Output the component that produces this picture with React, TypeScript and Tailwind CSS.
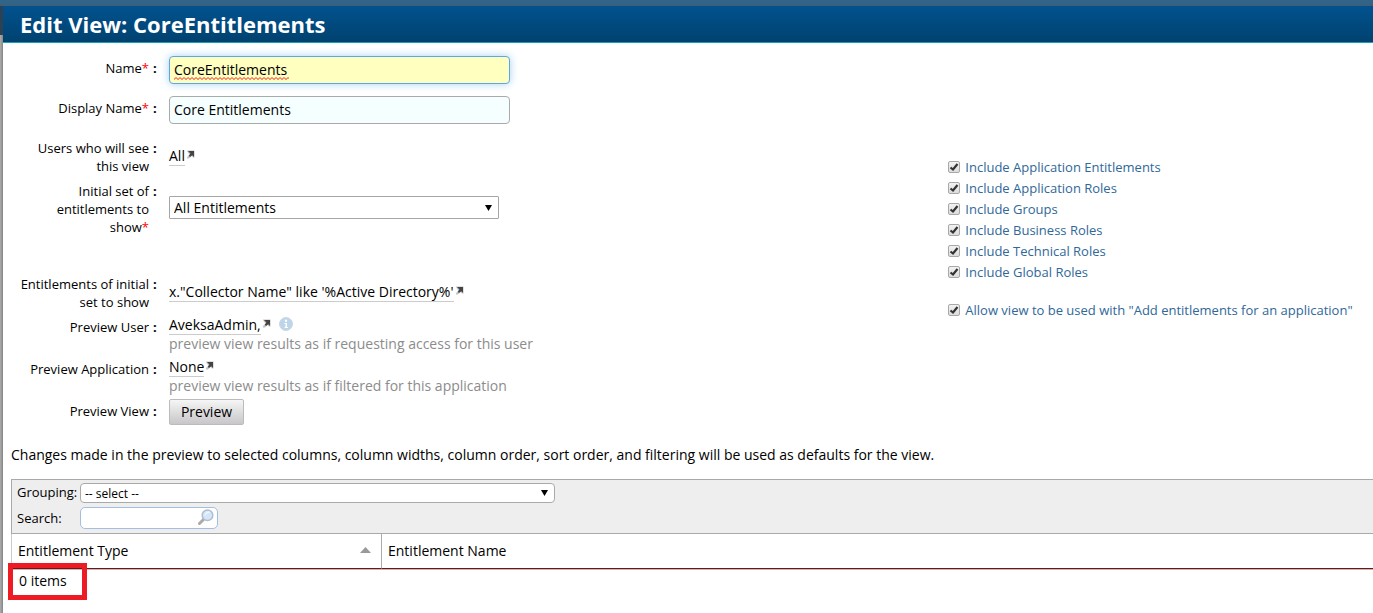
import { useState, type ReactNode } from "react";

const INCLUDES = [
  "Include Application Entitlements",
  "Include Application Roles",
  "Include Groups",
  "Include Business Roles",
  "Include Technical Roles",
  "Include Global Roles",
];

interface RowProps {
  label: string;
  htmlFor?: string;
  required?: boolean;
  className?: string;
  children: ReactNode;
}

function Row({ label, htmlFor, required, className = "", children }: RowProps) {
  return (
    <div className={`flex ${className}`}>
      <div className="flex w-[158px] shrink-0 pt-[3px]">
        <label
          htmlFor={htmlFor}
          className="ml-auto w-[130px] text-right text-[13px] leading-[18px]"
        >
          {label}
          {required && <span className="text-[#f00]">*</span>}
        </label>
        <span className="w-5 pl-1 text-[13px] leading-[18px] font-bold">:</span>
      </div>
      <div className="min-w-0">{children}</div>
    </div>
  );
}

function EditLink({ text }: { text: string }) {
  return (
    <a href="#" className="inline-flex items-start text-[14px] leading-[18px] text-black">
      <span className="border-b border-[#ccc]">{text}</span>
      <svg width="9" height="9" viewBox="0 0 9 9" className="mt-[3px] ml-px">
        <path d="M1 0.500h7.500V7.500H7L5.500 6 3 8.500H1V7l2.500-2.500L1.500 2z" fill="#c4c4c4" />
        <path d="M2 1h6v6L6.200 5.200 4 7 2.800 5.800 4.400 3.400z" fill="#444" />
      </svg>
    </a>
  );
}

function Check({ id, label }: { id: string; label: string }) {
  return (
    <div className="flex h-[21px] items-center">
      <span className="relative mr-[5px] h-3 w-3 shrink-0">
        <input
          id={id}
          type="checkbox"
          defaultChecked
          className="peer block h-3 w-3 appearance-none rounded-xs border border-[#a8a8a8] bg-linear-to-b from-[#f2f2f2] to-[#dcdcdc]"
        />
        <svg
          viewBox="0 0 12 12"
          className="pointer-events-none absolute inset-0 hidden h-3 w-3 peer-checked:block"
        >
          <path d="M2.500 6.500 5 8.500 9.500 3" fill="none" stroke="#333" strokeWidth="2.200" />
        </svg>
      </span>
      <label htmlFor={id} className="text-[13px] leading-[18px] text-[#2f6899]">
        {label}
      </label>
    </div>
  );
}

function Arrow() {
  return (
    <svg
      viewBox="0 0 7 6"
      className="pointer-events-none absolute top-1/2 right-[7px] h-[6px] w-[7px] -translate-y-1/2"
    >
      <path d="M0 0h7L3.500 6z" fill="#000" />
    </svg>
  );
}

// red zigzag under a misspelled word
function Squiggle() {
  return (
    <svg className="pointer-events-none absolute top-[21px] left-[5px] h-[3px] w-[115px]">
      <defs>
        <pattern id="squiggle" width="4" height="3" patternUnits="userSpaceOnUse">
          <path d="M-1 3.500 2 0.500 5 3.500" fill="none" stroke="#f02020" />
        </pattern>
      </defs>
      <rect width="100%" height="3" fill="url(#squiggle)" />
    </svg>
  );
}

export default function App() {
  const [name, setName] = useState("CoreEntitlements");
  const [displayName, setDisplayName] = useState("Core Entitlements");

  return (
    <div className="flex min-h-screen flex-col bg-white font-['Open_Sans',sans-serif] text-[14px] text-black">
      <div className="h-[6px] bg-linear-to-b from-[#2d668f] to-[#3c5f78]" />
      <div className="flex flex-1">
        <div className="flex w-[3px] shrink-0 flex-col bg-linear-to-r from-[#adadad] to-[#858585]">
          <div className="h-[29px] bg-[#2c4254]" />
        </div>
        <div className="flex min-w-0 flex-1 flex-col">
          <header className="flex h-[37px] items-center border-b border-[#18a0b8] bg-linear-to-b from-[#02528f] to-[#00426f] pl-[17px]">
            <h1 className="text-[22px] leading-[28px] font-bold text-white">
              Edit View: CoreEntitlements
            </h1>
          </header>

          <form className="flex pt-[13px]">
            <div className="w-[69%] shrink-0 pl-2">
              <Row label="Name" htmlFor="name" required className="h-10">
                <div className="relative w-[341px]">
                  <input
                    id="name"
                    value={name}
                    onChange={(e) => setName(e.target.value)}
                    spellCheck={false}
                    className="block h-7 w-full rounded-[4px] border border-[#5aa7e8] bg-[#ffffc0] px-1 pb-0.5 shadow-[0_0_8px_#a8d0f5] outline-none"
                  />
                  {name === "CoreEntitlements" && <Squiggle />}
                </div>
              </Row>
              <Row label="Display Name" htmlFor="display-name" required className="h-10">
                <input
                  id="display-name"
                  value={displayName}
                  onChange={(e) => setDisplayName(e.target.value)}
                  className="block h-7 w-[341px] rounded-[4px] border border-[#aaa] bg-[#f5ffff] px-1 pb-0.5 outline-none"
                />
              </Row>
              <Row label="Users who will see this view" className="min-h-[43px]">
                <div className="flex pt-[11px]">
                  <EditLink text="All" />
                </div>
              </Row>
              <Row
                label="Initial set of entitlements to show"
                htmlFor="initial-set"
                required
                className="min-h-[93px]"
              >
                <div className="relative mt-[17px] w-[330px]">
                  <select
                    id="initial-set"
                    className="block h-[23px] w-full appearance-none rounded-[1px] border border-[#a6a6a6] bg-white pr-6 pl-1 text-[14px]"
                  >
                    <option>All Entitlements</option>
                  </select>
                  <Arrow />
                </div>
              </Row>
              <Row label="Entitlements of initial set to show" className="min-h-[43px]">
                <div className="flex pt-[11px]">
                  <EditLink text={`x."Collector Name" like '%Active Directory%'`} />
                </div>
              </Row>
              <Row label="Preview User" className="min-h-[42px]">
                <div className="flex pt-px">
                  <EditLink text="AveksaAdmin," />
                  <svg width="14" height="14" viewBox="0 0 14 14" className="mt-px ml-2">
                    <circle cx="7" cy="7" r="6.500" fill="#bdd5ec" stroke="#d0d5da" />
                    <circle cx="7" cy="3.800" r="1.200" fill="#fff" />
                    <path d="M5.500 6H8v4h1v1H5.500v-1h1V7h-1z" fill="#fff" />
                  </svg>
                </div>
                <p className="leading-[18px] text-[#8c8c8c]">
                  preview view results as if requesting access for this user
                </p>
              </Row>
              <Row label="Preview Application" className="min-h-[42px]">
                <div className="flex pt-px">
                  <EditLink text="None" />
                </div>
                <p className="leading-[18px] text-[#8c8c8c]">
                  preview view results as if filtered for this application
                </p>
              </Row>
              <Row label="Preview View">
                <button
                  type="button"
                  className="block h-[26px] w-[75px] rounded-[2px] border border-[#bbb] bg-linear-to-b from-[#f6f6f6] to-[#c8c6c8] pb-0.5"
                >
                  Preview
                </button>
              </Row>
            </div>

            <div className="min-w-0 pt-[100px]">
              {INCLUDES.map((label, i) => (
                <Check key={label} id={`include-${i}`} label={label} />
              ))}
              <div className="pt-[17px]">
                <Check
                  id="allow-view"
                  label={'Allow view to be used with "Add entitlements for an application"'}
                />
              </div>
            </div>
          </form>

          <p className="mt-5 pl-2 leading-5">
            Changes made in the preview to selected columns, column widths, column order, sort
            order, and filtering will be used as defaults for the view.
          </p>

          <section className="mt-[14px] ml-2">
            <div className="h-[55px] border-y border-l border-[#a9a9a9] bg-[#eee] pt-[3px] pl-[5px] text-[13px]">
              <div className="flex items-center">
                <label htmlFor="grouping" className="w-[63px] pb-0.5 leading-[18px]">
                  Grouping:
                </label>
                <div className="relative w-[475px]">
                  <select
                    id="grouping"
                    className="block h-5 w-full appearance-none rounded-[4px] border border-[#aaa] bg-white pt-0.5 pr-6 pl-1 text-[12px] leading-4"
                  >
                    <option>-- select --</option>
                  </select>
                  <Arrow />
                </div>
              </div>
              <div className="mt-1 flex items-center">
                <label htmlFor="search" className="w-[63px] leading-5">
                  Search:
                </label>
                <div className="relative w-[138px]">
                  <input
                    id="search"
                    type="text"
                    className="block h-[22px] w-full rounded-[5px] border border-[#a3bfdf] bg-white pr-6 pl-1"
                  />
                  <svg
                    viewBox="0 0 16 16"
                    className="pointer-events-none absolute top-[2px] right-[4px] h-4 w-4"
                  >
                    <path d="M1.500 14.500 6 10" stroke="#aaa" strokeWidth="3" strokeLinecap="round" />
                    <circle cx="9.500" cy="6.200" r="5.300" fill="#d3e7fb" stroke="#b3bccb" strokeWidth="1.500" />
                    <path d="M6.500 7c2-3 4-3 6-4-1-1-5-1-6 4z" fill="#f3f9ff" />
                  </svg>
                </div>
              </div>
            </div>
            <table className="w-full table-fixed border-separate border-spacing-0 text-left">
              <thead>
                <tr className="h-[35px]">
                  <th className="w-[371px] border-r border-b border-l border-r-[#aaa] border-b-[#7d1010] border-l-[#ccc] p-0 pb-0.5 pl-[6px] font-normal">
                    <div className="flex items-center justify-between pr-[10px]">
                      Entitlement Type
                      <svg width="11" height="6" viewBox="0 0 11 6">
                        <path d="M5.500 0 11 6H0z" fill="#999" />
                      </svg>
                    </div>
                  </th>
                  <th className="border-b border-[#7d1010] p-0 pb-0.5 pl-[6px] font-normal">
                    Entitlement Name
                  </th>
                </tr>
              </thead>
              <tbody>
                <tr>
                  <td
                    colSpan={2}
                    className="relative border-t border-[#bbb] p-0 pt-px pl-2 leading-5"
                  >
                    0 items
                    <span className="absolute -top-[7px] -left-[3px] h-[37px] w-[79px] border-5 border-[#ed1c24]" />
                  </td>
                </tr>
              </tbody>
            </table>
          </section>
        </div>
      </div>
    </div>
  );
}
